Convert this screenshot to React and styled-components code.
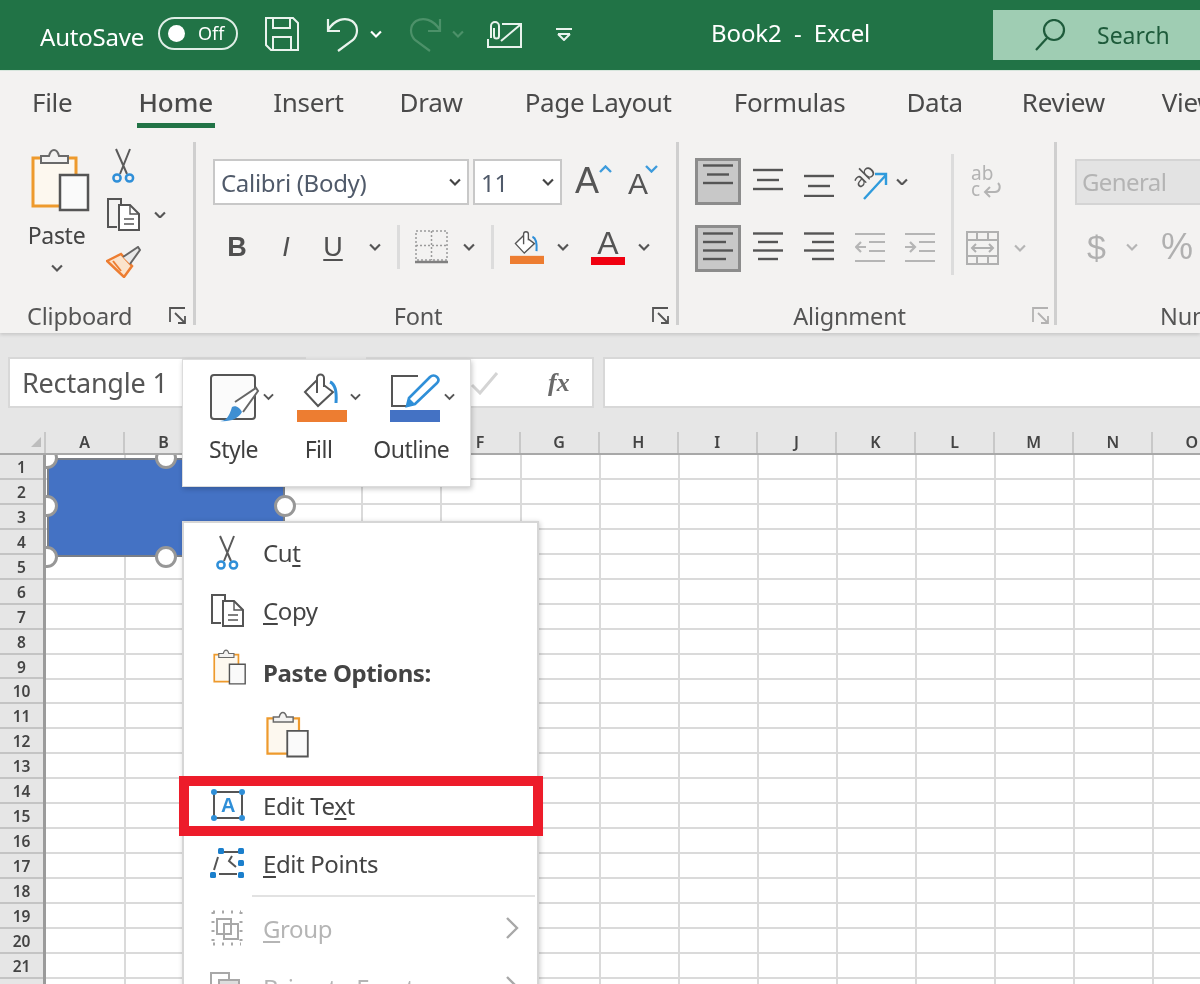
import React from "react";
import styled, { createGlobalStyle } from "styled-components";

const GlobalStyle = createGlobalStyle`
  html, body { margin: 0; padding: 0; background: #fff; }
  body { font-family: "Noto Sans", "Open Sans", "Liberation Sans", sans-serif; color: #444; }
`;

const COLS = ["A", "B", "C", "D", "E", "F", "G", "H", "I", "J", "K", "L", "M", "N", "O"];
const ROWS = Array.from({ length: 22 }, (_, i) => i + 1);
const TABS = [
  { label: "File", gap: 66 },
  { label: "Home", gap: 60, active: true },
  { label: "Insert", gap: 56 },
  { label: "Draw", gap: 62 },
  { label: "Page Layout", gap: 62 },
  { label: "Formulas", gap: 61 },
  { label: "Data", gap: 59 },
  { label: "Review", gap: 57 },
  { label: "View", gap: 0 },
];

const Page = styled.div`
  position: relative;
  width: 1200px;
  height: 984px;
  overflow: hidden;
  background: #e6e6e6;
  filter: blur(0.55px);
`;

/* title bar */
const TitleBar = styled.header`
  height: 71px;
  box-sizing: border-box;
  padding-left: 40px;
  background: #217346;
  border-bottom: 1px solid #d9e8df;
  display: flex;
  align-items: center;
  color: #fff;
  & > * { flex-shrink: 0; }
`;
const AutoSave = styled.span`
  font-size: 24px;
  width: 118px;
  letter-spacing: -0.2px;
  padding-top: 2px;
`;
const Toggle = styled.div`
  width: 80px;
  height: 33px;
  box-sizing: border-box;
  margin-top: -4px;
  border: 2px solid #dfeee6;
  border-radius: 17px;
  display: flex;
  align-items: center;
  padding-left: 8px;
  font-size: 18px;
  gap: 13px;
  &::before {
    content: "";
    width: 17px;
    height: 17px;
    border-radius: 50%;
    background: #fff;
  }
`;
const QuickAccess = styled.div`
  display: flex;
  align-items: center;
  width: 447px;
  margin-left: 26px;
  margin-top: -2px;
`;
const Slot = styled.span`
  display: inline-flex;
  align-items: center;
  justify-content: center;
  width: ${(p) => p.$w}px;
  margin-top: ${(p) => p.$dy || 0}px;
  flex-shrink: 0;
`;
const DocTitle = styled.div`
  width: 282px;
  font-size: 24px;
  white-space: pre;
  margin-top: -6px;
  letter-spacing: -0.1px;
`;
const SearchBox = styled.div`
  width: 207px;
  height: 50px;
  box-sizing: border-box;
  background: #9fcdb3;
  color: #1e5b3b;
  display: flex;
  align-items: center;
  padding-left: 42px;
  gap: 31px;
  font-size: 23px;
`;

/* ribbon */
const Ribbon = styled.div`
  height: 262px;
  background: #f3f2f1;
  box-shadow: 0 2px 3px #c9c9c9;
  position: relative;
`;
const Tabs = styled.nav`
  height: 64px;
  display: flex;
  align-items: flex-start;
  padding-left: 32px;
  white-space: nowrap;
  margin-bottom: 7px;
`;
const Tab = styled.span`
  position: relative;
  margin-right: ${(p) => p.$gap}px;
  padding-top: 13px;
  font-size: 26px;
  letter-spacing: ${(p) => (p.$active ? "0" : "-0.3px")};
  font-weight: ${(p) => (p.$active ? 500 : 400)};
  color: #4a4a4a;
  ${(p) =>
    p.$active &&
    `&::after {
      content: "";
      position: absolute;
      left: -1px;
      right: -2px;
      top: 52px;
      height: 5px;
      background: #217346;
    }`}
`;
const Groups = styled.div`
  display: flex;
  height: 183px;
`;
const Group = styled.section`
  position: relative;
  width: ${(p) => p.$w}px;
  flex-shrink: 0;
  box-sizing: border-box;
  border-right: ${(p) => (p.$last ? "none" : "3px solid #cfcfcf")};
  display: flex;
  flex-direction: column;
`;
const GroupBody = styled.div`
  height: 165px;
  display: flex;
  padding-left: ${(p) => p.$pad || 0}px;
`;
const GroupLabel = styled.div`
  font-size: 23.5px;
  line-height: 18px;
  text-align: ${(p) => (p.$left ? "left" : "center")};
  padding-left: ${(p) => p.$left || 0}px;
  padding-right: ${(p) => p.$right || 0}px;
  white-space: nowrap;
  color: #555;
  letter-spacing: -0.2px;
`;
const Launcher = styled.span`
  position: absolute;
  right: ${(p) => p.$right}px;
  bottom: 0;
  width: 18px;
  height: 18px;
  display: flex;
  opacity: ${(p) => (p.$dim ? 0.4 : 1)};
`;
const PasteColumn = styled.div`
  width: 79px;
  display: flex;
  flex-direction: column;
  align-items: center;
  padding-top: 6px;
  margin-left: -4px;
  flex-shrink: 0;
`;
const PasteArt = styled.span`
  display: flex;
  margin-left: 9px;
`;
const PasteLabel = styled.span`
  font-size: 23px;
  line-height: 30px;
  margin-top: 8px;
  letter-spacing: -0.3px;
`;
const PasteChevron = styled.span`
  display: flex;
  margin-top: 14px;
`;
const SmallTools = styled.div`
  display: flex;
  flex-direction: column;
  align-items: flex-start;
  gap: 15px;
  padding-top: 6px;
  margin-left: 7px;
`;
const ToolRow = styled.div`
  display: flex;
  align-items: center;
  height: ${(p) => p.$h || 46}px;
  margin-top: ${(p) => p.$top || 0}px;
`;
const RowsStack = styled.div`
  display: flex;
  flex-direction: column;
`;
const SelectBox = styled.div`
  width: ${(p) => p.$w}px;
  height: 46px;
  box-sizing: border-box;
  margin-right: ${(p) => p.$mr || 0}px;
  background: #fff;
  border: 2px solid #c8c8c8;
  display: flex;
  align-items: center;
  justify-content: space-between;
  padding: 0 6px 0 6px;
  font-size: 24px;
  letter-spacing: -0.3px;
  color: #505a6a;
  flex-shrink: 0;
`;
const GrowButton = styled.span`
  position: relative;
  width: ${(p) => p.$w}px;
  height: 46px;
  display: flex;
  align-items: flex-end;
  padding-bottom: 6px;
  box-sizing: border-box;
  flex-shrink: 0;
  font-family: "Liberation Sans", sans-serif;
  font-size: ${(p) => p.$size}px;
  line-height: 1;
  color: #555;
`;
const GrowCaret = styled.span`
  position: absolute;
  left: ${(p) => p.$x}px;
  top: 6px;
  display: flex;
`;
const FormatGlyph = styled.span`
  font-size: ${(p) => p.$size || 27}px;
  font-weight: ${(p) => (p.$bold ? 700 : 400)};
  font-style: ${(p) => (p.$italic ? "italic" : "normal")};
  text-decoration: ${(p) => (p.$under ? "underline" : "none")};
  text-underline-offset: 3px;
  color: ${(p) => p.$color || "#505050"};
  font-family: "Liberation Sans", sans-serif;
`;
const Divider = styled.span`
  width: 3px;
  height: 44px;
  background: #dcdcdc;
  flex-shrink: 0;
`;
const ColorA = styled.span`
  display: flex;
  flex-direction: column;
  align-items: center;
  width: 34px;
  font-family: "Liberation Sans", sans-serif;
  font-size: 32px;
  line-height: 28px;
  color: #555;
  &::after {
    content: "";
    width: 34px;
    height: 8px;
    background: #f00010;
  }
`;
const ActiveAlign = styled.span`
  width: 46px;
  height: 47px;
  box-sizing: border-box;
  background: #c8c8c8;
  border: 3px solid #8c8c8c;
  display: flex;
  align-items: center;
  justify-content: center;
  flex-shrink: 0;
`;
const VDivider = styled.span`
  width: 3px;
  height: 121px;
  margin: 12px 0 0;
  background: #dcdcdc;
  flex-shrink: 0;
`;
const NumberFormat = styled.div`
  width: 140px;
  height: 46px;
  box-sizing: border-box;
  background: #e3e3e3;
  border: 2px solid #d4d4d4;
  font-size: 24px;
  line-height: 42px;
  padding-left: 5px;
  letter-spacing: -0.6px;
  color: #b4b4b4;
`;

/* formula bar */
const FormulaBar = styled.div`
  height: 99px;
  box-sizing: border-box;
  padding: 24px 0 24px 8px;
  display: flex;
  background: #e6e6e6;
`;
const NameBox = styled.div`
  width: 298px;
  height: 51px;
  box-sizing: border-box;
  border: 2px solid #d8d8d8;
  background: #fff;
  padding-left: 12px;
  font-size: 27px;
  line-height: 47px;
  letter-spacing: -0.2px;
  color: #555;
  margin-right: 60px;
`;
const FormulaButtons = styled.div`
  width: 228px;
  height: 51px;
  box-sizing: border-box;
  border: 2px solid #d8d8d8;
  background: #fff;
  margin-right: 9px;
  display: flex;
  align-items: center;
  padding-left: 102px;
  gap: 48px;
`;
const Fx = styled.span`
  font-family: "Liberation Serif", serif;
  font-style: italic;
  font-weight: 700;
  font-size: 26px;
  color: #6a6a6a;
`;
const FormulaInput = styled.div`
  flex: 1;
  height: 51px;
  box-sizing: border-box;
  border: 2px solid #d8d8d8;
  border-right: none;
  background: #fff;
`;

/* sheet */
const ColumnHeader = styled.div`
  display: flex;
  height: 23px;
  background: #e6e6e6;
  border-bottom: 2px solid #a8a8a8;
  box-sizing: border-box;
`;
const Corner = styled.div`
  width: 46px;
  flex-shrink: 0;
  position: relative;
  border-right: 2px solid #c8c8c8;
  box-sizing: border-box;
  &::after {
    content: "";
    position: absolute;
    right: 3px;
    top: 5px;
    border-style: solid;
    border-width: 0 0 10px 10px;
    border-color: transparent transparent #bdbdbd transparent;
  }
`;
const ColumnCell = styled.div`
  width: 79.1px;
  flex-shrink: 0;
  box-sizing: border-box;
  text-align: center;
  font-size: 16px;
  line-height: 20px;
  font-weight: 600;
  color: #444;
  border-right: 2px solid #c8c8c8;
`;
const SheetBody = styled.div`
  display: flex;
  height: 529px;
`;
const RowHeader = styled.div`
  width: 46px;
  flex-shrink: 0;
  background: #e6e6e6;
  border-right: 3px solid #9b9b9b;
  box-sizing: border-box;
`;
const RowCell = styled.div`
  height: 24.95px;
  box-sizing: border-box;
  border-bottom: 2px solid #c4c4c4;
  text-align: center;
  font-size: 15.5px;
  font-weight: 600;
  line-height: 25px;
  color: #444;
`;
const Cells = styled.div`
  position: relative;
  flex: 1;
  overflow: hidden;
  background-color: #fff;
  background-image:
    repeating-linear-gradient(to right, transparent 0, transparent 77.1px, #dadada 77.1px, #dadada 79.1px),
    repeating-linear-gradient(to bottom, transparent 0, transparent 22.95px, #dadada 22.95px, #dadada 24.95px);
  background-position: 1px 0;
`;
const Shape = styled.div`
  position: absolute;
  left: 1px;
  top: 3px;
  width: 238px;
  height: 99px;
  box-sizing: border-box;
  background: #4472c4;
  border: 2px solid #7a7f88;
`;
const Handle = styled.span`
  position: absolute;
  left: ${(p) => p.$x}px;
  top: ${(p) => p.$y}px;
  width: 22px;
  height: 22px;
  margin: -11px 0 0 -11px;
  box-sizing: border-box;
  border-radius: 50%;
  background: #fff;
  border: 3px solid #979797;
`;

/* overlays */
const MiniToolbar = styled.div`
  position: absolute;
  left: 182px;
  top: 359px;
  width: 289px;
  height: 128px;
  box-sizing: border-box;
  background: #fff;
  border: 1px solid #dcdcdc;
  box-shadow: 1px 2px 5px rgba(0, 0, 0, 0.22);
  display: flex;
  padding: 12px 0 0 24px;
  color: #3f3f3f;
`;
const MiniItem = styled.div`
  width: ${(p) => p.$w}px;
  display: flex;
  flex-direction: column;
  align-items: flex-start;
`;
const MiniIconRow = styled.div`
  display: flex;
  align-items: center;
  height: 50px;
  margin-left: ${(p) => p.$ml || 0}px;
`;
const MiniLabel = styled.span`
  font-size: 23px;
  line-height: 30px;
  margin-top: 12px;
  margin-left: ${(p) => p.$ml || 0}px;
  letter-spacing: -0.5px;
`;
const Menu = styled.div`
  position: absolute;
  left: 182px;
  top: 521px;
  width: 357px;
  height: 500px;
  box-sizing: border-box;
  background: #fff;
  border: 2px solid #d6d6d6;
  box-shadow: 1px 1px 5px rgba(0, 0, 0, 0.2);
  display: flex;
  flex-direction: column;
`;
const MenuRow = styled.div`
  height: ${(p) => p.$h}px;
  margin-top: ${(p) => p.$top || 0}px;
  flex-shrink: 0;
  display: flex;
  align-items: center;
  font-size: 24px;
  letter-spacing: -0.4px;
  color: ${(p) => (p.$off ? "#b5b5b5" : "#444")};
  font-weight: ${(p) => (p.$bold ? 700 : 400)};
`;
const MenuIcon = styled.span`
  width: 79px;
  padding-left: 26px;
  box-sizing: border-box;
  display: flex;
  align-items: center;
  flex-shrink: 0;
`;
const MenuText = styled.span`
  flex: 1;
  white-space: nowrap;
  & u { text-underline-offset: 3px; text-decoration-thickness: 1.5px; }
`;
const MenuArrow = styled.span`
  width: 26px;
  margin-right: 6px;
  display: flex;
  flex-shrink: 0;
`;
const PasteChoice = styled.div`
  height: 59px;
  padding-left: 82px;
  flex-shrink: 0;
  display: flex;
  align-items: center;
`;
const MenuSeparator = styled.div`
  height: 2px;
  margin: 3px 2px 0 68px;
  background: #e2e2e2;
  flex-shrink: 0;
`;
const Highlight = styled.div`
  position: absolute;
  left: 179px;
  top: 776px;
  width: 364px;
  height: 60px;
  box-sizing: border-box;
  border: 10px solid #ed1c2a;
`;

/* drawings */
const Chevron = ({ color = "#555", size = 12 }) => (
  <svg width={size} height={size * 0.66} viewBox="0 0 12 8">
    <path d="M1 1.5 6 6.5 11 1.5" fill="none" stroke={color} strokeWidth="2.2" />
  </svg>
);

const SaveIcon = () => (
  <svg width="36" height="34" viewBox="0 0 36 34" fill="none" stroke="#e9f3ed" strokeWidth="2">
    <path d="M2 1h27l5 5v27H7l-5-5z" />
    <path d="M9 1v10h17V1M9 33V20h18v13" />
  </svg>
);

const UndoIcon = ({ color = "#e9f3ed", flip }) => (
  <svg width="34" height="36" viewBox="0 0 34 36" fill="none" stroke={color} strokeWidth="2.2"
    transform={flip ? "scale(-1 1)" : undefined}>
    <path d="M2 3v12h12M2 14C9 3 19 1 26 5c7 5 6 14 1 19L12 35" />
  </svg>
);

const MailIcon = () => (
  <svg width="36" height="28" viewBox="0 0 36 28" fill="none" stroke="#e9f3ed" strokeWidth="2">
    <path d="M1 19v8h33V4H15M14 21 33 5M22 4h12v11" />
    <path d="M4 18V6a4 4 0 0 1 8 0v10a2.5 2.5 0 0 1-5 0V8" />
  </svg>
);

const CustomizeIcon = () => (
  <svg width="16" height="14" viewBox="0 0 16 14" fill="none" stroke="#e9f3ed" strokeWidth="2">
    <path d="M0 2h16M2 7l6 6 6-6M2 7h12" />
  </svg>
);

const SearchIcon = () => (
  <svg width="31" height="32" viewBox="0 0 31 32" fill="none" stroke="#1e5b3b" strokeWidth="2.2">
    <circle cx="19" cy="11" r="10" />
    <path d="M12 19 1 31" />
  </svg>
);

const PasteIcon = ({ w = 60, h = 64 }) => (
  <svg width={w} height={h} viewBox="0 0 60 64">
    <path d="M2 10h43v48H2z" fill="#fdf8ef" stroke="#ee9a2d" strokeWidth="3" />
    <path d="M10 15V8h8c1-4 3-6 5-6s4 2 5 6h9v7z" fill="#f3f2f1" stroke="#6a6a6a" strokeWidth="2" />
    <path d="M29 27h28v35H29z" fill="#fafafa" stroke="#555" strokeWidth="2.5" />
  </svg>
);

const ScissorsIcon = ({ w = 23, h = 35 }) => (
  <svg width={w} height={h} viewBox="0 0 23 35" fill="none">
    <path d="M4 1 15 26M18 1 8 26" stroke="#5a5a5a" strokeWidth="2" />
    <circle cx="5" cy="30" r="3.6" stroke="#2f8fd8" strokeWidth="2.5" />
    <circle cx="17.5" cy="30" r="3.6" stroke="#2f8fd8" strokeWidth="2.5" />
  </svg>
);

const CopyIcon = ({ w = 34, h = 33 }) => (
  <svg width={w} height={h} viewBox="0 0 34 33" fill="none" stroke="#555" strokeWidth="2">
    <path d="M11 29H2V1h13v5" />
    <path d="M13 7h11l9 9v16H13z" fill="#fff" />
    <path d="M24 7v9h9M18 21h10M18 26h10" strokeWidth="1.4" />
  </svg>
);

const PainterIcon = () => (
  <svg width="35" height="32" viewBox="0 0 35 32" fill="none">
    <path d="M1 15 15 8l11 12-8 11z" fill="#fbe3cb" stroke="#ed7d31" strokeWidth="2.5" />
    <path d="M7 15l8 10" stroke="#ed7d31" strokeWidth="2" />
    <path d="M17 11 32 1l2 3-10 14" fill="#e8e8e8" stroke="#666" strokeWidth="2" />
  </svg>
);

const LauncherIcon = ({ color = "#555" }) => (
  <svg width="18" height="18" viewBox="0 0 18 18" fill="none" stroke={color} strokeWidth="1.8">
    <path d="M1 15V1h15" />
    <path d="M6 6l10 10M9 16h7V9" />
  </svg>
);

const Caret = ({ down }) => (
  <svg width="13" height="8" viewBox="0 0 13 8" fill="none" stroke="#3d9bdc" strokeWidth="2.4">
    <path d={down ? "M1 1l5.5 5.5L12 1" : "M1 7l5.5-5.5L12 7"} />
  </svg>
);

const BordersIcon = () => (
  <svg width="33" height="34" viewBox="0 0 33 34" fill="none" stroke="#9a9a9a" strokeWidth="1.5" strokeDasharray="2 2">
    <path d="M1 1h31v29H1zM16.5 1v29M1 15.5h31" />
    <path d="M0 32h33" strokeDasharray="none" strokeWidth="2.5" stroke="#808080" />
  </svg>
);

const FillIcon = ({ size = 50 }) => (
  <svg width={size} height={size} viewBox="0 0 50 50" fill="none">
    <path d="M8 20 20 8l16 12-15 14z" stroke="#555" strokeWidth="2" fill="#fff" />
    <path d="M20 21V6a3.5 3.5 0 0 1 7 0v9" stroke="#555" strokeWidth="2" fill="#fff" />
    <path d="M33 10c5 2 7 8 6 21" stroke="#2f8fd8" strokeWidth="3" />
    <rect x="0" y="38" width="50" height="12" fill="#ed7d31" />
  </svg>
);

const Lines = ({ rows, color = "#555", w = 32, h = 30 }) => (
  <svg width={w} height={h} viewBox={`0 0 ${w} ${h}`} stroke={color} strokeWidth="2.4">
    {rows.map(([x1, x2, y], i) => (
      <line key={i} x1={x1} x2={x2} y1={y} y2={y} />
    ))}
  </svg>
);

const OrientationIcon = () => (
  <svg width="36" height="36" viewBox="0 0 36 36" fill="none">
    <text x="0" y="0" transform="translate(8 25) rotate(-45)" fontSize="20" fill="#555" fontFamily="Noto Sans, sans-serif">ab</text>
    <path d="M12 35 34 11M23 10h11v11" stroke="#2f9bdc" strokeWidth="2.4" />
  </svg>
);

const WrapIcon = () => (
  <svg width="32" height="34" viewBox="0 0 32 34" fill="none">
    <text x="1" y="15" fontSize="19" fill="#b3b3b3" fontFamily="Noto Sans, sans-serif">ab</text>
    <text x="1" y="31" fontSize="19" fill="#b3b3b3" fontFamily="Noto Sans, sans-serif">c</text>
    <path d="M28 18c3 3 2 9-3 9H15M20 22l-5 5 5 5" stroke="#b3b3b3" strokeWidth="2" />
  </svg>
);

const IndentIcon = ({ flip }) => (
  <svg width="30" height="32" viewBox="0 0 30 32" fill="none" stroke="#b5b5b5" strokeWidth="2.2">
    <path d="M0 2h30M14 10h16M14 19h16M0 29h30" />
    {flip ? <path d="M0 15h9M5 10l5 5-5 5" /> : <path d="M11 15H2M6 10l-5 5 5 5" />}
  </svg>
);

const MergeIcon = () => (
  <svg width="33" height="34" viewBox="0 0 33 34" fill="none" stroke="#b0b0b0" strokeWidth="2">
    <path d="M1 1h31v32H1zM1 9h31M1 25h31M11 1v8M22 1v8M11 25v8M22 25v8" />
    <path d="M6 17h21M10 13l-4 4 4 4M23 13l4 4-4 4" />
  </svg>
);

const StyleIcon = () => (
  <svg width="52" height="50" viewBox="0 0 52 50" fill="none">
    <rect x="2" y="3" width="44" height="44" rx="3" stroke="#555" strokeWidth="2" fill="#fbfbfb" />
    <path d="M26 30 47 16l2 3-15 21" fill="#fff" stroke="#666" strokeWidth="2" />
    <path d="M11 49c6 0 9-4 12-14 4-2 8 1 10 5-4 7-12 10-22 9z" fill="#3f8fd2" />
  </svg>
);

const OutlineIcon = () => (
  <svg width="50" height="50" viewBox="0 0 50 50">
    <path d="M16 34H2V4h26" fill="none" stroke="#555" strokeWidth="2" />
    <path d="M17 34l2-8L40 5c2-2 5-2 7 0s2 4 0 6L25 32z" fill="#fff" stroke="#2f8fd8" strokeWidth="2.6" />
    <path d="M17 35l2-9 6 6z" fill="#2f8fd8" />
    <rect x="0" y="38" width="50" height="12" fill="#4472c4" />
  </svg>
);

const EditTextIcon = () => (
  <svg width="36" height="34" viewBox="0 0 36 34">
    <rect x="4" y="4" width="28" height="26" fill="none" stroke="#555" strokeWidth="2" />
    {[[4, 4], [32, 4], [4, 30], [32, 30]].map(([x, y]) => (
      <circle key={`${x}${y}`} cx={x} cy={y} r="3" fill="#2f8fd8" />
    ))}
    <text x="18" y="24" fontSize="20" textAnchor="middle" fontWeight="700" fill="#2f8fd8" fontFamily="Liberation Sans, sans-serif">A</text>
  </svg>
);

const EditPointsIcon = () => (
  <svg width="35" height="30" viewBox="0 0 35 30" fill="none">
    <path d="M10 4h18M22 8l-3 5 7 6M9 26h18M4 22 8 9" stroke="#555" strokeWidth="2" />
    {[[11, 3], [31, 3], [31, 15], [3, 27], [31, 27]].map(([x, y]) => (
      <rect key={`${x}${y}`} x={x - 3} y={y - 3} width="6" height="6" rx="1.5" fill="#1b7fcc" />
    ))}
  </svg>
);

const GroupIcon = () => (
  <svg width="34" height="36" viewBox="0 0 34 36" fill="none" stroke="#a8a8a8" strokeWidth="2">
    <path d="M3 2v32M31 2v32M3 2h28M3 34h28" strokeDasharray="2 7" strokeWidth="3" />
    <rect x="7" y="9" width="14" height="15" />
    <rect x="14" y="14" width="14" height="15" />
  </svg>
);

const BringIcon = () => (
  <svg width="32" height="30" viewBox="0 0 32 30" fill="none" stroke="#a8a8a8" strokeWidth="2">
    <rect x="1" y="1" width="18" height="18" />
    <rect x="9" y="8" width="20" height="20" fill="#ddd" />
  </svg>
);

const ChevronRight = ({ color = "#a8a8a8" }) => (
  <svg width="14" height="24" viewBox="0 0 14 24" fill="none" stroke={color} strokeWidth="2.4">
    <path d="M2 2l10 10L2 22" />
  </svg>
);

const App = () => (
  <>
    <GlobalStyle />
    <Page>
      <TitleBar>
        <AutoSave>AutoSave</AutoSave>
        <Toggle>Off</Toggle>
        <QuickAccess>
          <Slot $w={36}><SaveIcon /></Slot>
          <Slot $w={26} />
          <Slot $w={34}><UndoIcon /></Slot>
          <Slot $w={32}><Chevron color="#fff" /></Slot>
          <Slot $w={16} />
          <Slot $w={34}><UndoIcon color="#4c9169" flip /></Slot>
          <Slot $w={32}><Chevron color="#4c9169" /></Slot>
          <Slot $w={13} />
          <Slot $w={36}><MailIcon /></Slot>
          <Slot $w={33} />
          <Slot $w={16}><CustomizeIcon /></Slot>
        </QuickAccess>
        <DocTitle>{"Book2  -  Excel"}</DocTitle>
        <SearchBox>
          <SearchIcon />
          Search
        </SearchBox>
      </TitleBar>

      <Ribbon>
        <Tabs>
          {TABS.map((t) => (
            <Tab key={t.label} $gap={t.gap} $active={t.active}>{t.label}</Tab>
          ))}
        </Tabs>
        <Groups>
          <Group $w={196}>
            <GroupBody $pad={21}>
              <PasteColumn>
                <PasteArt><PasteIcon /></PasteArt>
                <PasteLabel>Paste</PasteLabel>
                <PasteChevron><Chevron /></PasteChevron>
              </PasteColumn>
              <SmallTools>
                <Slot $w={40}><ScissorsIcon /></Slot>
                <ToolRow $h={33}>
                  <Slot $w={40}><CopyIcon /></Slot>
                  <Slot $w={34}><Chevron /></Slot>
                </ToolRow>
                <Slot $w={40}><PainterIcon /></Slot>
              </SmallTools>
            </GroupBody>
            <GroupLabel $left={27}>Clipboard</GroupLabel>
            <Launcher $right={6}><LauncherIcon /></Launcher>
          </Group>

          <Group $w={483}>
            <GroupBody $pad={17}>
              <RowsStack>
                <ToolRow $top={17}>
                  <SelectBox $w={256} $mr={4}>Calibri (Body)<Chevron color="#444" /></SelectBox>
                  <SelectBox $w={89} $mr={13}>11<Chevron color="#444" /></SelectBox>
                  <GrowButton $w={53} $size={36}>
                    A
                    <GrowCaret $x={24}><Caret /></GrowCaret>
                  </GrowButton>
                  <GrowButton $w={32} $size={30}>
                    A
                    <GrowCaret $x={17}><Caret down /></GrowCaret>
                  </GrowButton>
                </ToolRow>
                <ToolRow $top={19}>
                  <Slot $w={48}><FormatGlyph $bold>B</FormatGlyph></Slot>
                  <Slot $w={50}><FormatGlyph $italic>I</FormatGlyph></Slot>
                  <Slot $w={44}><FormatGlyph $under>U</FormatGlyph></Slot>
                  <Slot $w={40}><Chevron /></Slot>
                  <Slot $w={6}><Divider /></Slot>
                  <Slot $w={12} />
                  <Slot $w={36}><BordersIcon /></Slot>
                  <Slot $w={40}><Chevron /></Slot>
                  <Slot $w={6}><Divider /></Slot>
                  <Slot $w={15} />
                  <Slot $w={34}><FillIcon size={34} /></Slot>
                  <Slot $w={38}><Chevron /></Slot>
                  <Slot $w={9} />
                  <Slot $w={34}><ColorA>A</ColorA></Slot>
                  <Slot $w={38}><Chevron /></Slot>
                </ToolRow>
              </RowsStack>
            </GroupBody>
            <GroupLabel $right={36}>Font</GroupLabel>
            <Launcher $right={6}><LauncherIcon /></Launcher>
          </Group>

          <Group $w={378}>
            <GroupBody $pad={16}>
              <RowsStack>
                <ToolRow $top={16} $h={47}>
                  <ActiveAlign><Lines w={32} h={40} rows={[[1, 31, 3.5], [5, 27, 12.5], [1, 31, 21]]} /></ActiveAlign>
                  <Slot $w={12} />
                  <Slot $w={30}><Lines w={30} h={30} rows={[[0, 30, 3], [4, 26, 13], [0, 30, 22]]} /></Slot>
                  <Slot $w={21} />
                  <Slot $w={30}><Lines w={30} h={30} rows={[[0, 30, 9], [4, 26, 19], [0, 30, 29]]} /></Slot>
                  <Slot $w={18} />
                  <Slot $w={36}><OrientationIcon /></Slot>
                  <Slot $w={28}><Chevron /></Slot>
                </ToolRow>
                <ToolRow $top={19} $h={48}>
                  <ActiveAlign><Lines w={32} h={32} rows={[[1, 31, 1.5], [1, 24, 10], [1, 31, 18.5], [1, 24, 27]]} /></ActiveAlign>
                  <Slot $w={12} />
                  <Slot $w={30}><Lines w={30} h={32} rows={[[0, 30, 1.5], [5, 25, 10], [0, 30, 18.5], [5, 25, 27]]} /></Slot>
                  <Slot $w={21} />
                  <Slot $w={30}><Lines w={30} h={32} rows={[[0, 30, 1.5], [8, 30, 10], [0, 30, 18.5], [8, 30, 27]]} /></Slot>
                  <Slot $w={21} />
                  <Slot $w={30}><IndentIcon /></Slot>
                  <Slot $w={20} />
                  <Slot $w={30}><IndentIcon flip /></Slot>
                </ToolRow>
              </RowsStack>
              <Slot $w={16} />
              <RowsStack>
                <VDivider />
              </RowsStack>
              <RowsStack>
                <ToolRow $top={16} $h={47}>
                  <Slot $w={16} />
                  <Slot $w={32}><WrapIcon /></Slot>
                </ToolRow>
                <ToolRow $top={19} $h={48}>
                  <Slot $w={12} />
                  <Slot $w={33}><MergeIcon /></Slot>
                  <Slot $w={42}><Chevron color="#b5b5b5" /></Slot>
                </ToolRow>
              </RowsStack>
            </GroupBody>
            <GroupLabel $right={34}>Alignment</GroupLabel>
            <Launcher $right={4} $dim><LauncherIcon /></Launcher>
          </Group>

          <Group $w={143} $last>
            <GroupBody $pad={18}>
              <RowsStack>
                <ToolRow $top={17}><NumberFormat>General</NumberFormat></ToolRow>
                <ToolRow $top={19}>
                  <Slot $w={12} />
                  <FormatGlyph $size={34} $color="#b0b0b0">$</FormatGlyph>
                  <Slot $w={52}><Chevron color="#b5b5b5" /></Slot>
                  <Slot $w={3} />
                  <FormatGlyph $size={36} $color="#b0b0b0">%</FormatGlyph>
                </ToolRow>
              </RowsStack>
            </GroupBody>
            <GroupLabel $left={103}>Number</GroupLabel>
          </Group>
        </Groups>
      </Ribbon>

      <FormulaBar>
        <NameBox>Rectangle 1</NameBox>
        <FormulaButtons>
          <svg width="30" height="24" viewBox="0 0 30 24" fill="none" stroke="#d4d4d4" strokeWidth="3">
            <path d="M2 14l8 8L27 2" />
          </svg>
          <Fx>fx</Fx>
        </FormulaButtons>
        <FormulaInput />
      </FormulaBar>

      <ColumnHeader>
        <Corner />
        {COLS.map((c) => (
          <ColumnCell key={c}>{c}</ColumnCell>
        ))}
      </ColumnHeader>
      <SheetBody>
        <RowHeader>
          {ROWS.map((r) => (
            <RowCell key={r}>{r}</RowCell>
          ))}
        </RowHeader>
        <Cells>
          <Shape />
          <Handle $x={1} $y={3} />
          <Handle $x={120} $y={3} />
          <Handle $x={1} $y={51} />
          <Handle $x={239} $y={51} />
          <Handle $x={1} $y={102} />
          <Handle $x={120} $y={102} />
        </Cells>
      </SheetBody>

      <MiniToolbar>
        <MiniItem $w={90}>
          <MiniIconRow $ml={2}>
            <StyleIcon />
            <Slot $w={14}><Chevron size={11} /></Slot>
          </MiniIconRow>
          <MiniLabel $ml={2}>Style</MiniLabel>
        </MiniItem>
        <MiniItem $w={90}>
          <MiniIconRow>
            <FillIcon />
            <Slot $w={18}><Chevron size={11} /></Slot>
          </MiniIconRow>
          <MiniLabel $ml={8}>Fill</MiniLabel>
        </MiniItem>
        <MiniItem $w={84}>
          <MiniIconRow $ml={4}>
            <OutlineIcon />
            <Slot $w={18}><Chevron size={11} /></Slot>
          </MiniIconRow>
          <MiniLabel $ml={-13}>Outline</MiniLabel>
        </MiniItem>
      </MiniToolbar>

      <Menu>
        <MenuRow $h={58}>
          <MenuIcon><Slot $w={34}><ScissorsIcon /></Slot></MenuIcon>
          <MenuText>Cu<u>t</u></MenuText>
        </MenuRow>
        <MenuRow $h={58}>
          <MenuIcon><CopyIcon /></MenuIcon>
          <MenuText><u>C</u>opy</MenuText>
        </MenuRow>
        <MenuRow $h={66} $bold>
          <MenuIcon><Slot $w={40} $dy={-10}><PasteIcon w={34} h={36} /></Slot></MenuIcon>
          <MenuText>Paste Options:</MenuText>
        </MenuRow>
        <PasteChoice><PasteIcon w={44} h={47} /></PasteChoice>
        <MenuRow $h={58} $top={12}>
          <MenuIcon><EditTextIcon /></MenuIcon>
          <MenuText>Edit Te<u>x</u>t</MenuText>
        </MenuRow>
        <MenuRow $h={58}>
          <MenuIcon><EditPointsIcon /></MenuIcon>
          <MenuText><u>E</u>dit Points</MenuText>
        </MenuRow>
        <MenuSeparator />
        <MenuRow $h={62} $off>
          <MenuIcon><GroupIcon /></MenuIcon>
          <MenuText><u>G</u>roup</MenuText>
          <MenuArrow><ChevronRight /></MenuArrow>
        </MenuRow>
        <MenuRow $h={56} $off>
          <MenuIcon><BringIcon /></MenuIcon>
          <MenuText>Bring to Front</MenuText>
          <MenuArrow><ChevronRight /></MenuArrow>
        </MenuRow>
      </Menu>
      <Highlight />
    </Page>
  </>
);

export default App;
